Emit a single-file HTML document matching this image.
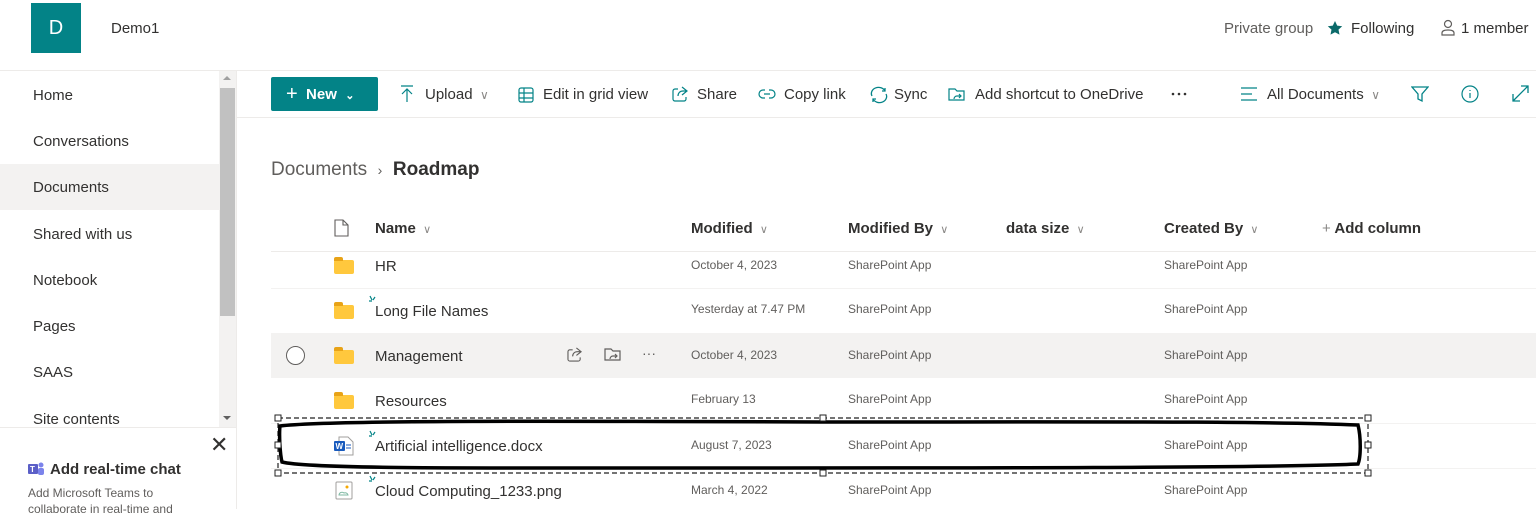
<!DOCTYPE html>
<html><head><meta charset="utf-8"><style>
*{box-sizing:border-box;margin:0;padding:0}
body{width:1536px;height:509px;overflow:hidden;background:#fff;font-family:"Liberation Sans",sans-serif;color:#323130;position:relative}
.a{position:absolute;white-space:nowrap}
.nav{font-size:15px;color:#323130;left:33px}
.tb{font-size:15px;color:#323130;top:86px}
.hd{font-size:15px;font-weight:bold;top:220px;color:#323130}
.nm{font-size:15px;left:375px}
.sm{font-size:12px;color:#605e5c}
.fold{position:absolute;left:334px;width:20px;height:14px;background:#ffc83d;border-radius:2px}
.fold:before{content:"";position:absolute;left:0;top:-3px;width:9px;height:4px;background:#e8a317;border-radius:2px 2px 0 0}
</style></head><body>
<div class="a" style="left:31px;top:3px;width:50px;height:50px;background:#038387;color:#fff;font-size:20px;text-align:center;line-height:50px">D</div>
<div class="a" style="left:111px;top:20px;font-size:15px">Demo1</div>
<div class="a" style="left:1224px;top:20px;font-size:15px;color:#605e5c">Private group</div>
<svg class="a" style="left:1327px;top:20px" width="16" height="16" viewBox="0 0 16 16"><path d="M8 1l2.2 4.6 5 .6-3.7 3.4 1 5L8 12.2 3.5 14.6l1-5L.8 6.2l5-.6z" fill="#0b6a6a"/></svg>
<div class="a" style="left:1351px;top:20px;font-size:15px">Following</div>
<svg class="a" style="left:1440px;top:19px" width="16" height="18" viewBox="0 0 16 18" fill="none" stroke="#605e5c" stroke-width="1.2"><circle cx="8" cy="5" r="3.5"/><path d="M2 16v-2c0-2 2-3 6-3s6 1 6 3v2z"/></svg>
<div class="a" style="left:1461px;top:20px;font-size:15px">1 member</div>
<div class="a" style="left:0;top:70px;width:1536px;height:1px;background:#edebe9"></div>
<div class="a" style="left:0;top:164px;width:220px;height:46px;background:#f3f2f1"></div>
<div class="a nav" style="top:87px">Home</div>
<div class="a nav" style="top:133px">Conversations</div>
<div class="a nav" style="top:179px">Documents</div>
<div class="a nav" style="top:226px">Shared with us</div>
<div class="a nav" style="top:272px">Notebook</div>
<div class="a nav" style="top:318px">Pages</div>
<div class="a nav" style="top:364px">SAAS</div>
<div class="a nav" style="top:411px">Site contents</div>
<div class="a" style="left:219px;top:71px;width:17px;height:356px;background:#f3f2f1"></div>
<div class="a" style="left:220px;top:88px;width:15px;height:228px;background:#c1c1c1"></div>
<div class="a" style="left:223px;top:76px;border:4px solid transparent;border-bottom:4px solid #a0a0a0;border-top:0"></div>
<div class="a" style="left:223px;top:416px;border:4px solid transparent;border-top:4px solid #606060;border-bottom:0"></div>
<div class="a" style="left:236px;top:71px;width:1px;height:438px;background:#edebe9"></div>
<div class="a" style="left:0;top:427px;width:236px;height:1px;background:#edebe9"></div>
<div class="a" style="left:210px;top:432px;font-size:22px;color:#323130">✕</div>
<svg class="a" style="left:27px;top:461px" width="18" height="16" viewBox="0 0 18 16"><rect x="1" y="3" width="10" height="10" rx="1" fill="#5b5fc7"/><circle cx="14" cy="4" r="2.5" fill="#7b83eb"/><rect x="11" y="7" width="6" height="7" rx="2" fill="#7b83eb"/><text x="3" y="11" font-size="8" fill="#fff" font-family="Liberation Sans" font-weight="bold">T</text></svg>
<div class="a" style="left:50px;top:461px;font-size:15px;font-weight:bold">Add real-time chat</div>
<div class="a" style="left:28px;top:485px;font-size:12px;color:#605e5c;line-height:16px">Add Microsoft Teams to<br>collaborate in real-time and</div>
<div class="a" style="left:271px;top:77px;width:107px;height:34px;background:#038387;border-radius:2px;color:#fff;font-size:15px;font-weight:bold;line-height:34px;padding-left:15px"><span style="font-size:20px;font-weight:normal;vertical-align:-1px">+</span>&nbsp; New &nbsp;<span style="font-size:11px">&#8964;</span></div>
<svg class="a" style="left:400px;top:85px" width="14" height="18" viewBox="0 0 14 18" fill="none" stroke="#038387" stroke-width="1.2"><path d="M1 1h12M7 4v13M2 9l5-5 5 5"/></svg>
<div class="a tb" style="left:425px">Upload <span style="color:#8a8886;font-size:12px">&nbsp;∨</span></div>
<svg class="a" style="left:518px;top:87px" width="16" height="16" viewBox="0 0 16 16" fill="none" stroke="#038387" stroke-width="1.2"><rect x="1" y="1" width="14" height="14" rx="2"/><path d="M1 6h14M1 11h14M6 1v14"/></svg>
<div class="a tb" style="left:543px">Edit in grid view</div>
<svg class="a" style="left:672px;top:86px" width="17" height="16" viewBox="0 0 17 16" fill="none" stroke="#038387" stroke-width="1.2"><path d="M6 3H3a2 2 0 00-2 2v8a2 2 0 002 2h9a2 2 0 002-2v-2M10 1l5 4-5 4M15 5h-4c-3 0-5 2-5 5"/></svg>
<div class="a tb" style="left:697px">Share</div>
<svg class="a" style="left:758px;top:88px" width="18" height="12" viewBox="0 0 18 12" fill="none" stroke="#038387" stroke-width="1.2"><path d="M7 2H5a4 4 0 000 8h2M11 2h2a4 4 0 010 8h-2M6 6h6"/></svg>
<div class="a tb" style="left:784px">Copy link</div>
<svg class="a" style="left:869px;top:86px" width="20" height="18" viewBox="0 0 20 18" fill="none" stroke="#038387" stroke-width="1.3"><path d="M3 10a7 6 0 0113-5M17 8a7 6 0 01-13 5"/><path d="M16 2v3h-3M4 16v-3h3"/></svg>
<div class="a tb" style="left:894px">Sync</div>
<svg class="a" style="left:948px;top:86px" width="18" height="17" viewBox="0 0 18 17" fill="none" stroke="#038387" stroke-width="1.2"><path d="M1 3h6l2 2h7v9H1z"/><path d="M6 13a3 3 0 013-3h4M11 8l2 2-2 2"/></svg>
<div class="a tb" style="left:975px">Add shortcut to OneDrive</div>
<svg class="a" style="left:1171px;top:92px" width="16" height="4" viewBox="0 0 16 4" fill="#323130"><circle cx="2" cy="2" r="1.3"/><circle cx="8" cy="2" r="1.3"/><circle cx="14" cy="2" r="1.3"/></svg>
<svg class="a" style="left:1240px;top:87px" width="18" height="15" viewBox="0 0 18 15" stroke="#038387" stroke-width="1.2"><path d="M1 1h16M1 7h11M1 13h16"/></svg>
<div class="a tb" style="left:1267px">All Documents <span style="color:#8a8886;font-size:12px">&nbsp;∨</span></div>
<svg class="a" style="left:1411px;top:86px" width="18" height="17" viewBox="0 0 18 17" fill="none" stroke="#038387" stroke-width="1.3"><path d="M1 1h16l-6 7v7l-4-2V8z"/></svg>
<svg class="a" style="left:1461px;top:85px" width="18" height="18" viewBox="0 0 18 18" fill="none" stroke="#038387" stroke-width="1.2"><circle cx="9" cy="9" r="8"/><path d="M9 8v5M9 5v1"/></svg>
<svg class="a" style="left:1512px;top:85px" width="17" height="17" viewBox="0 0 17 17" fill="none" stroke="#038387" stroke-width="1.3"><path d="M1 16L16 1M9 1h7v7M1 9v7h7"/></svg>
<div class="a" style="left:237px;top:117px;width:1299px;height:1px;background:#edebe9"></div>
<div class="a" style="left:271px;top:159px;font-size:19px;color:#605e5c">Documents &nbsp;<span style="font-size:14px">›</span>&nbsp; <b style="color:#323130">Roadmap</b></div>
<svg class="a" style="left:334px;top:219px" width="15" height="18" viewBox="0 0 15 18" fill="none" stroke="#605e5c" stroke-width="1.1"><path d="M1 1h8l5 5v11H1zM9 1v5h5"/></svg>
<div class="a hd" style="left:375px">Name <span style="color:#8a8886;font-size:11px;font-weight:normal">&nbsp;∨</span></div>
<div class="a hd" style="left:691px">Modified <span style="color:#8a8886;font-size:11px;font-weight:normal">&nbsp;∨</span></div>
<div class="a hd" style="left:848px">Modified By <span style="color:#8a8886;font-size:11px;font-weight:normal">&nbsp;∨</span></div>
<div class="a hd" style="left:1006px">data size <span style="color:#8a8886;font-size:11px;font-weight:normal">&nbsp;∨</span></div>
<div class="a hd" style="left:1164px">Created By <span style="color:#8a8886;font-size:11px;font-weight:normal">&nbsp;∨</span></div>
<div class="a hd" style="left:1322px"><span style="font-weight:normal;color:#8a8886">+</span> Add column</div>
<div class="a" style="left:271px;top:251px;width:1265px;height:1px;background:#edebe9"></div>
<div class="a" style="left:271px;top:288px;width:1265px;height:1px;background:#f3f2f1"></div>
<div class="a" style="left:271px;top:333px;width:1265px;height:45px;background:#f3f2f1"></div>
<div class="a" style="left:271px;top:423px;width:1265px;height:1px;background:#f3f2f1"></div>
<div class="a" style="left:271px;top:468px;width:1265px;height:1px;background:#f3f2f1"></div>
<div class="fold" style="top:260px"></div>
<div class="a nm" style="top:258px">HR</div>
<div class="a sm" style="left:691px;top:258px">October 4, 2023</div>
<div class="a sm" style="left:848px;top:258px">SharePoint App</div>
<div class="a sm" style="left:1164px;top:258px">SharePoint App</div>
<div class="fold" style="top:305px"></div>
<div class="a nm" style="top:303px">Long File Names</div>
<div class="a sm" style="left:691px;top:302px">Yesterday at 7.47 PM</div>
<div class="a sm" style="left:848px;top:302px">SharePoint App</div>
<div class="a sm" style="left:1164px;top:302px">SharePoint App</div>
<div class="a" style="left:286px;top:346px;width:19px;height:19px;border:1.3px solid #605e5c;border-radius:50%;background:#fff"></div>
<div class="fold" style="top:350px"></div>
<div class="a nm" style="top:348px">Management</div>
<svg class="a" style="left:567px;top:347px" width="16" height="15" viewBox="0 0 17 16" fill="none" stroke="#605e5c" stroke-width="1.2"><path d="M6 3H3a2 2 0 00-2 2v8a2 2 0 002 2h9a2 2 0 002-2v-2M10 1l5 4-5 4M15 5h-4c-3 0-5 2-5 5"/></svg>
<svg class="a" style="left:604px;top:346px" width="18" height="17" viewBox="0 0 18 17" fill="none" stroke="#605e5c" stroke-width="1.2"><path d="M1 3h6l2 2h7v9H1z"/><path d="M6 13a3 3 0 013-3h4M11 8l2 2-2 2"/></svg>
<div class="a" style="left:642px;top:345px;font-size:14px;color:#605e5c">···</div>
<div class="a sm" style="left:691px;top:348px">October 4, 2023</div>
<div class="a sm" style="left:848px;top:348px">SharePoint App</div>
<div class="a sm" style="left:1164px;top:348px">SharePoint App</div>
<div class="fold" style="top:395px"></div>
<div class="a nm" style="top:393px">Resources</div>
<div class="a sm" style="left:691px;top:392px">February 13</div>
<div class="a sm" style="left:848px;top:392px">SharePoint App</div>
<div class="a sm" style="left:1164px;top:392px">SharePoint App</div>
<svg class="a" style="left:334px;top:436px" width="20" height="20" viewBox="0 0 20 20"><path d="M5 1h9l5 5v13H5z" fill="#fff" stroke="#a19f9d"/><rect x="0" y="5" width="11" height="10" rx="1" fill="#185abd"/><text x="1.5" y="13" font-size="8" fill="#fff" font-family="Liberation Sans" font-weight="bold">W</text><path d="M12 9h5M12 12h5" stroke="#185abd"/></svg>
<div class="a nm" style="top:438px">Artificial intelligence.docx</div>
<div class="a sm" style="left:691px;top:438px">August 7, 2023</div>
<div class="a sm" style="left:848px;top:438px">SharePoint App</div>
<div class="a sm" style="left:1164px;top:438px">SharePoint App</div>
<svg class="a" style="left:335px;top:481px" width="18" height="19" viewBox="0 0 18 19" fill="none"><rect x="1" y="1" width="16" height="17" rx="1" stroke="#a19f9d"/><circle cx="12" cy="6" r="1.5" fill="#f7a800"/><path d="M4 14a3 3 0 015-2 3 3 0 014 2z" stroke="#7fb9a3"/></svg>
<div class="a nm" style="top:483px">Cloud Computing_1233.png</div>
<div class="a sm" style="left:691px;top:483px">March 4, 2022</div>
<div class="a sm" style="left:848px;top:483px">SharePoint App</div>
<div class="a sm" style="left:1164px;top:483px">SharePoint App</div>
<svg class="a" style="left:366px;top:294px" width="12" height="200" viewBox="0 0 12 200" stroke="#038387" stroke-width="1.2" fill="none"><path d="M4 2l2 4M9 3l-2 3M3 7h3"/><path d="M4 137l2 4M9 138l-2 3M3 142h3"/><path d="M4 182l2 4M9 183l-2 3M3 187h3"/></svg>
<svg class="a" style="left:270px;top:412px" width="1110" height="68" viewBox="0 0 1110 68" fill="none">
<rect x="8" y="6" width="1090" height="55" stroke="#222" stroke-width="1.2" stroke-dasharray="5 3"/>
<path d="M10 14C60 8 300 9 560 10C800 10 1000 9 1088 13C1091 25 1091 45 1088 52C1000 56 700 56 400 56C200 56 40 57 12 50C10 42 9 22 10 14Z" stroke="#000" stroke-width="3.5"/>
<g fill="#fff" stroke="#222" stroke-width="1"><rect x="5" y="3" width="6" height="6"/><rect x="550" y="3" width="6" height="6"/><rect x="1095" y="3" width="6" height="6"/><rect x="5" y="30" width="6" height="6"/><rect x="1095" y="30" width="6" height="6"/><rect x="5" y="58" width="6" height="6"/><rect x="550" y="58" width="6" height="6"/><rect x="1095" y="58" width="6" height="6"/></g>
</svg>
</body></html>
